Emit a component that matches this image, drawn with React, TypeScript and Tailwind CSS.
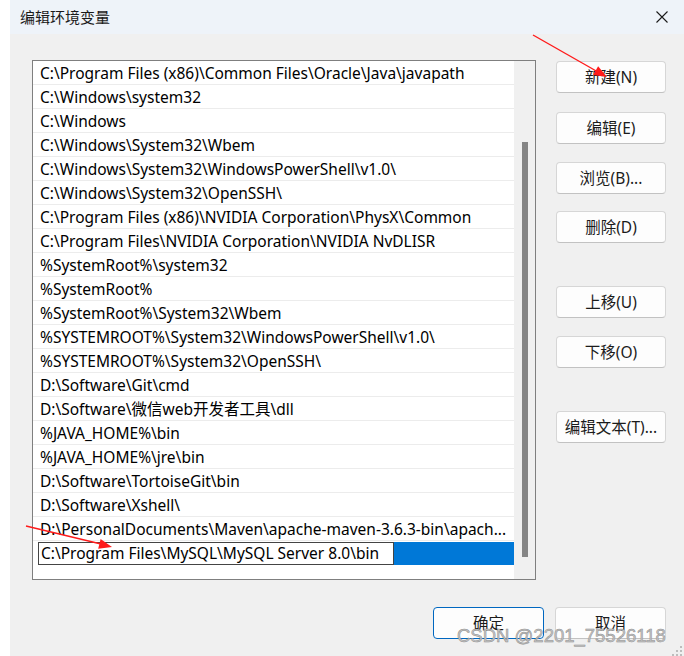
import React from "react";

const rows: string[] = [
  "C:\\Program Files (x86)\\Common Files\\Oracle\\Java\\javapath",
  "C:\\Windows\\system32",
  "C:\\Windows",
  "C:\\Windows\\System32\\Wbem",
  "C:\\Windows\\System32\\WindowsPowerShell\\v1.0\\",
  "C:\\Windows\\System32\\OpenSSH\\",
  "C:\\Program Files (x86)\\NVIDIA Corporation\\PhysX\\Common",
  "C:\\Program Files\\NVIDIA Corporation\\NVIDIA NvDLISR",
  "%SystemRoot%\\system32",
  "%SystemRoot%",
  "%SystemRoot%\\System32\\Wbem",
  "%SYSTEMROOT%\\System32\\WindowsPowerShell\\v1.0\\",
  "%SYSTEMROOT%\\System32\\OpenSSH\\",
  "D:\\Software\\Git\\cmd",
  "D:\\Software\\微信web开发者工具\\dll",
  "%JAVA_HOME%\\bin",
  "%JAVA_HOME%\\jre\\bin",
  "D:\\Software\\TortoiseGit\\bin",
  "D:\\Software\\Xshell\\",
  "D:\\PersonalDocuments\\Maven\\apache-maven-3.6.3-bin\\apach...",
];

const font = "font-['Noto_Sans','Noto_Sans_CJK_SC',sans-serif]";

function Btn({ label, className = "" }: { label: string; className?: string }) {
  return (
    <div
      className={`w-[110px] h-[32px] rounded-[4px] bg-[#fdfdfd] border border-[#d6d6d6] border-b-[#c2c2c2] flex items-center justify-center pt-[2px] text-[15.5px] leading-none text-[#1b1b1b] ${className}`}
    >
      {label}
    </div>
  );
}

export default function App() {
  return (
    <div className={`w-[684px] h-[656px] bg-white flex relative overflow-hidden ${font}`}>
      <div className="ml-[10px] flex-1 flex flex-col bg-[#f0f0f0]">
        {/* title bar */}
        <div className="h-[34px] bg-[#eef3f9] flex items-center justify-between pl-[10px] pr-[16px]">
          <span className="text-[15px] text-[#1a1a1a] leading-none">编辑环境变量</span>
          <svg width="12" height="12" viewBox="0 0 12 12">
            <path d="M0.5 0.5 L11.5 11.5 M11.5 0.5 L0.5 11.5" stroke="#1a1a1a" strokeWidth="1.1" />
          </svg>
        </div>
        {/* body */}
        <div className="flex pl-[22px] pt-[26px]">
          <div className="w-[504px] h-[520px] border border-[#7f7f7f] bg-white flex">
            <div className="w-[481px] flex flex-col">
              {rows.map((r, i) => (
                <div
                  key={i}
                  className="h-[24px] border-b border-[#ececec] flex items-center pl-[7px] pt-[2px] text-[15.5px] leading-none text-[#000] whitespace-nowrap"
                >
                  {r}
                </div>
              ))}
              <div className="h-[24px] flex items-stretch pl-[5px] pt-[1px]">
                <div className="w-[356px] border border-[#444] bg-white flex items-center pl-[2px] pt-[1px] text-[15.5px] leading-none text-black whitespace-nowrap">
                  C:\Program Files\MySQL\MySQL Server 8.0\bin
                </div>
                <div className="flex-1 bg-[#0078d7]" />
              </div>
            </div>
            <div className="flex-1 bg-[#f0f0f0] flex justify-center pt-[81px]">
              <div className="w-[6px] h-[415px] bg-[#858585]" />
            </div>
          </div>
          <div className="ml-[20px] flex flex-col">
            <Btn label="新建(N)" className="mt-[1px]" />
            <Btn label="编辑(E)" className="mt-[19px]" />
            <Btn label="浏览(B)..." className="mt-[18px]" />
            <Btn label="删除(D)" className="mt-[17px]" />
            <Btn label="上移(U)" className="mt-[43px]" />
            <Btn label="下移(O)" className="mt-[18px]" />
            <Btn label="编辑文本(T)..." className="mt-[43px]" />
          </div>
        </div>
        <div className="flex justify-end pr-[18px] mt-[27px] gap-[11px]">
          <Btn label="确定" className="!w-[111px] !border-[#0067c0] !border-[1.5px]" />
          <Btn label="取消" className="!w-[111px]" />
        </div>
      </div>

      {/* watermark */}
      <div className="absolute left-[457px] top-[627px] font-['Liberation_Sans',sans-serif] text-[18.5px] leading-none text-[#c6c6c6] [-webkit-text-stroke:0.5px_#8c8c8c] whitespace-nowrap pointer-events-none">
        CSDN @2201_75526118
      </div>

      {/* resize grip */}
      <svg className="absolute left-[672px] top-[646px]" width="12" height="10" viewBox="0 0 12 10">
        <rect x="8" y="0" width="2" height="2" fill="#bdbdbd" />
        <rect x="4" y="4" width="2" height="2" fill="#bdbdbd" />
        <rect x="8" y="4" width="2" height="2" fill="#bdbdbd" />
        <rect x="0" y="8" width="2" height="2" fill="#bdbdbd" />
        <rect x="4" y="8" width="2" height="2" fill="#bdbdbd" />
        <rect x="8" y="8" width="2" height="2" fill="#bdbdbd" />
      </svg>

      {/* red annotation arrows */}
      <svg className="absolute left-0 top-0 pointer-events-none" width="684" height="656" viewBox="0 0 684 656">
        <line x1="533" y1="35" x2="598" y2="72" stroke="#ff1a1a" strokeWidth="1.4" />
        <polygon points="607,77 593.2,75 598.1,66.2" fill="#ff1a1a" />
        <line x1="26" y1="526" x2="101" y2="544" stroke="#ff1a1a" strokeWidth="1.4" />
        <polygon points="112,547 98.2,548.8 100.6,539" fill="#ff1a1a" />
      </svg>
    </div>
  );
}
